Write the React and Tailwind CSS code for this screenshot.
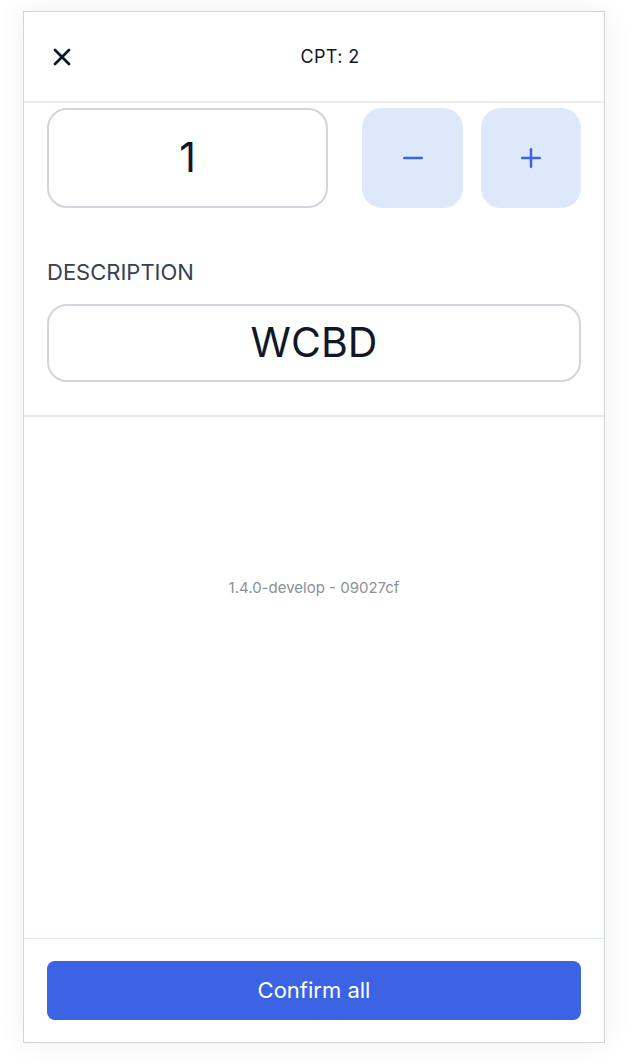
import React from "react";
import { X, Minus, Plus } from "lucide-react";

const App = () => {
  return (
    <div
      className="w-[638px] h-[1064px] bg-white pt-[11px] pl-[23px]"
      style={{ fontFamily: "Inter, 'Noto Sans', sans-serif" }}
    >
      <div className="w-[582px] h-[1032px] flex flex-col bg-white border border-gray-300 shadow-[0_0_28px_rgba(0,0,0,0.07)]">
        {/* header */}
        <div className="h-[91px] flex items-center px-6 border-b-2 border-[#ececec]">
          <button className="w-8 h-8 flex items-center justify-start text-gray-900">
            <X size={28} strokeWidth={2.4} />
          </button>
          <div className="flex-1 text-center text-[18px] tracking-[0.02em] text-gray-900">CPT: 2</div>
        </div>

        {/* quantity row */}
        <div className="flex items-center px-[23px] mt-[5px]">
          <div className="w-[282px] h-[100px] rounded-[20px] border-2 border-gray-300 flex items-center justify-center text-[41px] text-gray-900">
            1
          </div>
          <button className="ml-[34px] w-[101px] h-[100px] rounded-[20px] bg-[#dee8fb] flex items-center justify-center text-[#3b63e3]">
            <Minus size={30} strokeWidth={2} />
          </button>
          <button className="ml-[18px] w-[100px] h-[100px] rounded-[20px] bg-[#dee8fb] flex items-center justify-center text-[#3b63e3]">
            <Plus size={30} strokeWidth={2} />
          </button>
        </div>

        {/* description */}
        <div className="px-[23px] mt-[49px]">
          <div className="text-[22px] leading-[30px] text-gray-700">DESCRIPTION</div>
          <div className="mt-[17px] h-[78px] rounded-[20px] border-2 border-gray-300 flex items-center justify-center text-[41px] text-gray-900">
            WCBD
          </div>
        </div>

        <div className="mt-[33px] border-b-2 border-gray-200" />

        {/* empty area with version */}
        <div className="flex-1 flex flex-col items-center">
          <div className="mt-[160px] text-[15px] text-[#8e9096]">1.4.0-develop - 09027cf</div>
        </div>

        {/* footer */}
        <div className="h-[104px] border-t border-[#e0e6fb] px-[23px] pt-[22px]">
          <button className="w-full h-[59px] rounded-lg bg-[#3b63e3] text-white text-[22px]">
            Confirm all
          </button>
        </div>
      </div>
    </div>
  );
};

export default App;
